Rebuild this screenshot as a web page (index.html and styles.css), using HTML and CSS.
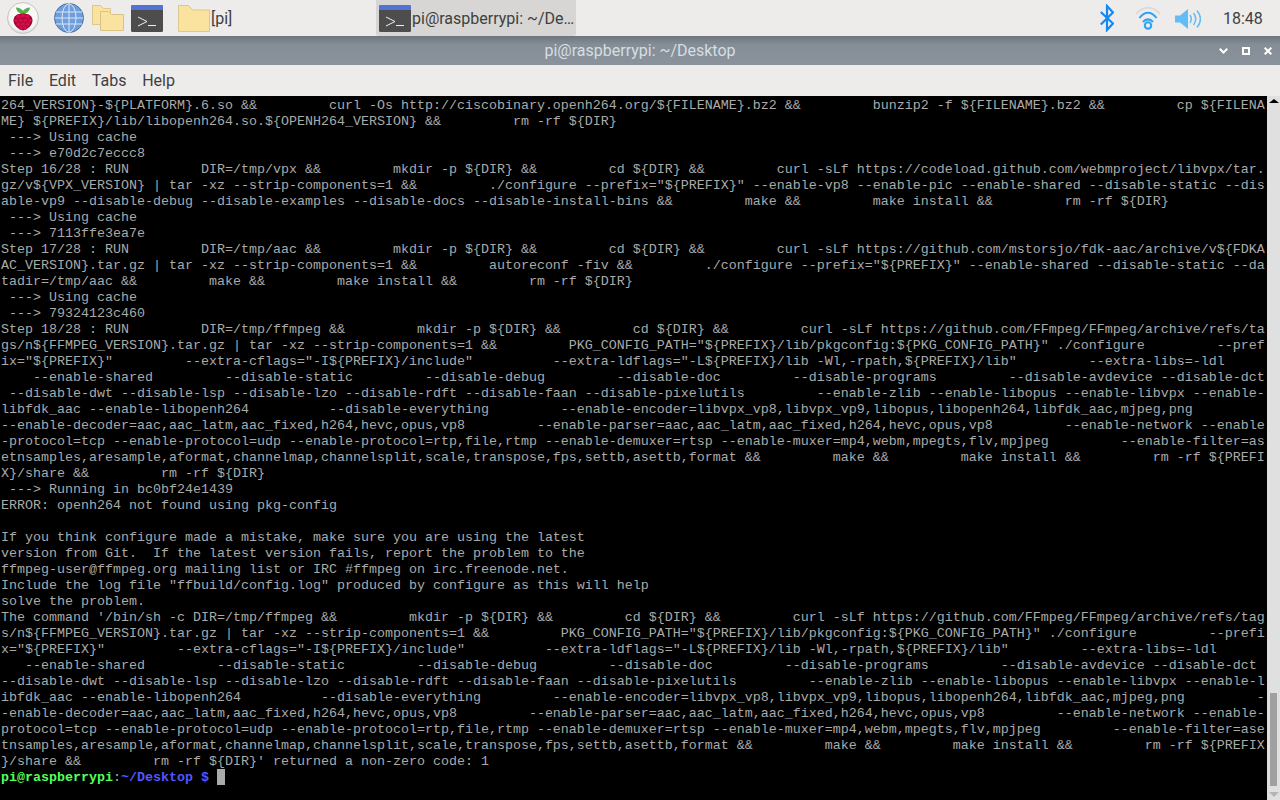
FILE: index.html
```html
<!DOCTYPE html>
<html lang="en">
<head>
<meta charset="utf-8">
<title>pi@raspberrypi: ~/Desktop</title>
<link rel="stylesheet" href="styles.css">
</head>
<body>
<header class="taskbar">
  <svg class="ic ic-rpi" width="32" height="32" viewBox="0 0 32 32">
    <defs><radialGradient id="rg" cx=".5" cy=".45" r=".55"><stop offset="0" stop-color="#fff"/><stop offset=".8" stop-color="#f6f6f6"/><stop offset="1" stop-color="#d4d4d4"/></radialGradient></defs>
    <circle cx="16" cy="16" r="15.5" fill="url(#rg)" stroke="#c6c6c6"/>
    <path d="M9 5.500c3 0 5.500 1.300 7 3.300 1.500-2 4-3.300 7-3.300-.4 3.500-3 6-7 6.500-4-.5-6.600-3-7-6.500z" fill="#55b04a"/>
    <path d="M16 11.500c5.500 0 9.500 2.500 9.500 7 0 4.500-5 9.500-9.500 10-4.500-.5-9.500-5.500-9.500-10 0-4.500 4-7 9.500-7z" fill="#8f0a30"/>
    <g fill="#d40c47"><circle cx="11.500" cy="14.500" r="2.300"/><circle cx="16" cy="13.800" r="2.300"/><circle cx="20.500" cy="14.500" r="2.300"/><circle cx="9.300" cy="18.500" r="2.100"/><circle cx="13.800" cy="18.300" r="2.100"/><circle cx="18.200" cy="18.300" r="2.100"/><circle cx="22.700" cy="18.500" r="2.100"/><circle cx="11.500" cy="22.300" r="2.200"/><circle cx="16" cy="22.300" r="2.200"/><circle cx="20.500" cy="22.300" r="2.200"/><circle cx="14" cy="26" r="1.900"/><circle cx="18" cy="26" r="1.900"/></g>
  </svg>
  <svg class="ic ic-globe" width="30" height="30" viewBox="0 0 30 30">
    <circle cx="15" cy="15" r="14.500" fill="#6e9fdc" stroke="#4c6f9e"/>
    <g fill="none" stroke="#dbe7f6" stroke-width="1"><ellipse cx="15" cy="15" rx="7" ry="14.300"/><path d="M15 .7v28.600M2 9h26M.7 15h28.600M2 21h26"/></g>
  </svg>
  <svg class="ic ic-files" width="32" height="26" viewBox="0 0 32 26">
    <path d="M.5 19.500V.5h8l3 3h7v16z" fill="#fae39f" stroke="#dcc78c"/>
    <path d="M8.500 25.500V6.500h8l3 3h12v16z" fill="#fae39f" stroke="#d8c285"/>
  </svg>
  <svg class="ic ic-term" width="32" height="27" viewBox="0 0 32 27">
    <use href="#termicon"/>
  </svg>
  <div class="task task-folder">
    <svg class="ic ic-low" width="32" height="27" viewBox="0 0 32 27"><path d="M.5 26.500V.5h10l4 4.500h17v21.500z" fill="#fae39f" stroke="#dcc78c"/></svg>
    <span class="task-label">[pi]</span>
  </div>
  <div class="task task-active">
    <svg class="ic ic-low" width="32" height="27" viewBox="0 0 32 27">
      <g id="termicon">
        <rect width="32" height="27" rx="1.500" fill="#4d4d4d"/>
        <path d="M0 1.500A1.500 1.500 0 0 1 1.500 0h29A1.500 1.500 0 0 1 32 1.500V5H0z" fill="#5272d6"/>
        <path d="M7 12l9 4.500-9 4.500" fill="none" stroke="#f2f2f2" stroke-width="1"/>
        <path d="M17 20.500h8" stroke="#f2f2f2" stroke-width="1"/>
      </g>
    </svg>
    <span class="task-label">pi@raspberrypi: ~/De…</span>
  </div>
  <div class="tray">
    <svg class="ic ic-bt" width="14" height="28" viewBox="0 0 14 28"><path d="M.8 8L13 19.500 7 26V2l6 6.500L.8 20.500" fill="none" stroke="#1288f5" stroke-width="2.200"/></svg>
    <svg class="ic ic-wifi" width="26" height="26" viewBox="0 0 26 26">
      <path d="M1 9C8 .5 18 .5 25 9" fill="none" stroke="#dcdcdc" stroke-width="2"/>
      <path d="M4.500 13C9.500 6 16.500 6 21.500 13" fill="none" stroke="#2ba2f5" stroke-width="2.100"/>
      <path d="M8 17c3-3.500 7-3.500 10 0" fill="none" stroke="#2ba2f5" stroke-width="2.100"/>
      <circle cx="13" cy="20.500" r="3.200" fill="none" stroke="#2ba2f5" stroke-width="2.100"/>
    </svg>
    <svg class="ic ic-vol" width="26" height="20" viewBox="0 0 26 20">
      <path d="M0 6.500h5L13 0v20l-8-6.500H0z" fill="#62bdf7"/>
      <g fill="none" stroke="#62bdf7" stroke-width="1.500"><path d="M15 6c1.600 2.500 1.600 5.500 0 8"/><path d="M18.500 4c2.800 3.800 2.800 8.200 0 12"/><path d="M22 1.500c4.300 5.300 4.300 11.700 0 17"/></g>
    </svg>
    <span class="clock">18:48</span>
  </div>
</header>
<div class="titlebar">
  <span class="title">pi@raspberrypi: ~/Desktop</span>
  <div class="winbtns">
    <svg width="9" height="6" viewBox="0 0 9 6"><path d="M.7.7l3.800 3.800L8.300.7" fill="none" stroke="#fff" stroke-width="2"/></svg>
    <svg width="8" height="8" viewBox="0 0 8 8"><rect x="1" y="1" width="6" height="6" fill="none" stroke="#fff" stroke-width="2"/></svg>
    <svg width="8" height="8" viewBox="0 0 8 8"><path d="M.7.7l6.600 6.600M7.300.7L.7 7.300" fill="none" stroke="#fff" stroke-width="2"/></svg>
  </div>
</div>
<nav class="menubar">
  <span class="menu-item">File</span>
  <span class="menu-item">Edit</span>
  <span class="menu-item">Tabs</span>
  <span class="menu-item">Help</span>
</nav>
<main class="terminal">
<pre class="screen">264_VERSION}-${PLATFORM}.6.so &amp;&amp;         curl -Os http://ciscobinary.openh264.org/${FILENAME}.bz2 &amp;&amp;         bunzip2 -f ${FILENAME}.bz2 &amp;&amp;         cp ${FILENA
ME} ${PREFIX}/lib/libopenh264.so.${OPENH264_VERSION} &amp;&amp;         rm -rf ${DIR}
 ---&gt; Using cache
 ---&gt; e70d2c7eccc8
Step 16/28 : RUN         DIR=/tmp/vpx &amp;&amp;         mkdir -p ${DIR} &amp;&amp;         cd ${DIR} &amp;&amp;         curl -sLf https://codeload.github.com/webmproject/libvpx/tar.
gz/v${VPX_VERSION} | tar -xz --strip-components=1 &amp;&amp;         ./configure --prefix="${PREFIX}" --enable-vp8 --enable-pic --enable-shared --disable-static --dis
able-vp9 --disable-debug --disable-examples --disable-docs --disable-install-bins &amp;&amp;         make &amp;&amp;         make install &amp;&amp;         rm -rf ${DIR}
 ---&gt; Using cache
 ---&gt; 7113ffe3ea7e
Step 17/28 : RUN         DIR=/tmp/aac &amp;&amp;         mkdir -p ${DIR} &amp;&amp;         cd ${DIR} &amp;&amp;         curl -sLf https://github.com/mstorsjo/fdk-aac/archive/v${FDKA
AC_VERSION}.tar.gz | tar -xz --strip-components=1 &amp;&amp;         autoreconf -fiv &amp;&amp;         ./configure --prefix="${PREFIX}" --enable-shared --disable-static --da
tadir=/tmp/aac &amp;&amp;         make &amp;&amp;         make install &amp;&amp;         rm -rf ${DIR}
 ---&gt; Using cache
 ---&gt; 79324123c460
Step 18/28 : RUN         DIR=/tmp/ffmpeg &amp;&amp;         mkdir -p ${DIR} &amp;&amp;         cd ${DIR} &amp;&amp;         curl -sLf https://github.com/FFmpeg/FFmpeg/archive/refs/ta
gs/n${FFMPEG_VERSION}.tar.gz | tar -xz --strip-components=1 &amp;&amp;         PKG_CONFIG_PATH="${PREFIX}/lib/pkgconfig:${PKG_CONFIG_PATH}" ./configure         --pref
ix="${PREFIX}"         --extra-cflags="-I${PREFIX}/include"          --extra-ldflags="-L${PREFIX}/lib -Wl,-rpath,${PREFIX}/lib"         --extra-libs=-ldl
    --enable-shared         --disable-static         --disable-debug         --disable-doc         --disable-programs         --disable-avdevice --disable-dct
 --disable-dwt --disable-lsp --disable-lzo --disable-rdft --disable-faan --disable-pixelutils         --enable-zlib --enable-libopus --enable-libvpx --enable-
libfdk_aac --enable-libopenh264          --disable-everything         --enable-encoder=libvpx_vp8,libvpx_vp9,libopus,libopenh264,libfdk_aac,mjpeg,png
--enable-decoder=aac,aac_latm,aac_fixed,h264,hevc,opus,vp8         --enable-parser=aac,aac_latm,aac_fixed,h264,hevc,opus,vp8         --enable-network --enable
-protocol=tcp --enable-protocol=udp --enable-protocol=rtp,file,rtmp --enable-demuxer=rtsp --enable-muxer=mp4,webm,mpegts,flv,mpjpeg         --enable-filter=as
etnsamples,aresample,aformat,channelmap,channelsplit,scale,transpose,fps,settb,asettb,format &amp;&amp;         make &amp;&amp;         make install &amp;&amp;         rm -rf ${PREFI
X}/share &amp;&amp;         rm -rf ${DIR}
 ---&gt; Running in bc0bf24e1439
ERROR: openh264 not found using pkg-config

If you think configure made a mistake, make sure you are using the latest
version from Git.  If the latest version fails, report the problem to the
ffmpeg-user@ffmpeg.org mailing list or IRC #ffmpeg on irc.freenode.net.
Include the log file "ffbuild/config.log" produced by configure as this will help
solve the problem.
The command '/bin/sh -c DIR=/tmp/ffmpeg &amp;&amp;         mkdir -p ${DIR} &amp;&amp;         cd ${DIR} &amp;&amp;         curl -sLf https://github.com/FFmpeg/FFmpeg/archive/refs/tag
s/n${FFMPEG_VERSION}.tar.gz | tar -xz --strip-components=1 &amp;&amp;         PKG_CONFIG_PATH="${PREFIX}/lib/pkgconfig:${PKG_CONFIG_PATH}" ./configure         --prefi
x="${PREFIX}"         --extra-cflags="-I${PREFIX}/include"          --extra-ldflags="-L${PREFIX}/lib -Wl,-rpath,${PREFIX}/lib"         --extra-libs=-ldl
   --enable-shared         --disable-static         --disable-debug         --disable-doc         --disable-programs         --disable-avdevice --disable-dct
--disable-dwt --disable-lsp --disable-lzo --disable-rdft --disable-faan --disable-pixelutils         --enable-zlib --enable-libopus --enable-libvpx --enable-l
ibfdk_aac --enable-libopenh264          --disable-everything         --enable-encoder=libvpx_vp8,libvpx_vp9,libopus,libopenh264,libfdk_aac,mjpeg,png         -
-enable-decoder=aac,aac_latm,aac_fixed,h264,hevc,opus,vp8         --enable-parser=aac,aac_latm,aac_fixed,h264,hevc,opus,vp8         --enable-network --enable-
protocol=tcp --enable-protocol=udp --enable-protocol=rtp,file,rtmp --enable-demuxer=rtsp --enable-muxer=mp4,webm,mpegts,flv,mpjpeg         --enable-filter=ase
tnsamples,aresample,aformat,channelmap,channelsplit,scale,transpose,fps,settb,asettb,format &amp;&amp;         make &amp;&amp;         make install &amp;&amp;         rm -rf ${PREFIX
}/share &amp;&amp;         rm -rf ${DIR}' returned a non-zero code: 1
<span class="p-user">pi@raspberrypi</span>:<span class="p-path">~/Desktop $</span> <span class="cursor"> </span></pre>
  <aside class="scrollbar">
    <span class="arrow-up"></span>
    <span class="track"><span class="thumb"></span></span>
    <span class="arrow-down"></span>
  </aside>
</main>
</body>
</html>
```
FILE: styles.css
```css
* { box-sizing: border-box; }
html, body { margin: 0; height: 100%; }
body {
  width: 1280px;
  height: 800px;
  overflow: hidden;
  display: flex;
  flex-direction: column;
  background: #edeceb;
  font-family: Roboto, sans-serif;
  font-size: 16px;
  color: #3f3f3f;
}
.ic { display: block; flex: none; }
.taskbar {
  height: 36px;
  flex: none;
  display: flex;
  align-items: center;
  background: #edeceb;
}
.ic-rpi { margin-left: 7px; }
.ic-globe { margin-left: 15px; }
.ic-files { margin-left: 8px; }
.ic-term { margin-left: 7px; margin-top: 1px; }
.ic-low { margin-top: 1px; }
.task {
  height: 36px;
  display: flex;
  align-items: center;
  white-space: nowrap;
}
.task-folder { margin-left: 15px; width: 198px; }
.task-label { margin-left: 1px; }
.task-active {
  width: 200px;
  padding-left: 3px;
  background: #d7d6d4;
  border-radius: 0 0 3px 3px;
}
.tray { margin-left: auto; display: flex; align-items: center; }
.ic-bt { margin-right: 21px; }
.ic-wifi { margin-right: 14px; }
.ic-vol { margin-right: 22px; margin-top: 2px; }
.clock { width: 57px; }
.titlebar {
  height: 29px;
  flex: none;
  display: flex;
  align-items: center;
  justify-content: center;
  position: relative;
  background: linear-gradient(#6d757d, #858e96 30%, #8a939b);
}
.title { color: #d5dee3; }
.winbtns {
  position: absolute;
  right: 8px;
  top: 11px;
  display: flex;
  align-items: center;
  gap: 14px;
}
.menubar {
  height: 31px;
  flex: none;
  display: flex;
  align-items: center;
  padding-left: 8px;
  gap: 15.8px;
  background: #edeceb;
}
.terminal {
  flex: 1;
  min-height: 0;
  display: flex;
  background: #000;
}
.screen {
  margin: 0;
  padding: 2px 0 0 1px;
  width: 1267px;
  flex: none;
  overflow: hidden;
  background: #000;
  color: #aaa;
  font-family: "Liberation Mono", monospace;
  font-size: 13.333px;
  line-height: 16px;
}
.p-user { color: #55ff55; font-weight: 700; }
.p-path { color: #5555ff; font-weight: 700; }
.cursor { display: inline-block; width: 8px; height: 16px; margin-top: -1px; vertical-align: top; background: #aaa; }
.scrollbar {
  flex: 1;
  display: flex;
  flex-direction: column;
  align-items: center;
  background: #e0e0e0;
}
.arrow-up, .arrow-down {
  flex: none;
  width: 0;
  height: 0;
  border-left: 5px solid transparent;
  border-right: 5px solid transparent;
}
.arrow-up { margin-top: 3px; border-bottom: 4px solid #000; }
.arrow-down { margin-bottom: 3px; border-top: 5px solid #b5b5b5; }
.track { flex: 1; width: 7px; display: flex; flex-direction: column; justify-content: flex-end; padding-bottom: 6px; }
.thumb { display: block; height: 93px; background: #a0a0a0; }
```
